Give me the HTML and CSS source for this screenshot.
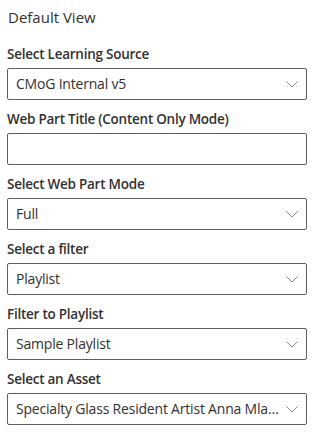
FILE: index.html
```html
<!DOCTYPE html>
<html>
<head>
<meta charset="utf-8">
<link rel="stylesheet" href="styles.css">
</head>
<body>
<div class="pane">
  <div class="header">Default View</div>
  <div class="fields">
    <div class="field">
      <div class="label">Select Learning Source</div>
      <div class="dropdown"><span class="value">CMoG Internal v5</span><svg class="caret" width="12" height="7" viewBox="0 0 12 7"><polyline points="0.5,0.5 6,6 11.5,0.5" fill="none" stroke="#8a8886" stroke-width="1"/></svg></div>
    </div>
    <div class="field">
      <div class="label">Web Part Title (Content Only Mode)</div>
      <div class="textfield"></div>
    </div>
    <div class="field">
      <div class="label">Select Web Part Mode</div>
      <div class="dropdown"><span class="value">Full</span><svg class="caret" width="12" height="7" viewBox="0 0 12 7"><polyline points="0.5,0.5 6,6 11.5,0.5" fill="none" stroke="#8a8886" stroke-width="1"/></svg></div>
    </div>
    <div class="field">
      <div class="label">Select a filter</div>
      <div class="dropdown"><span class="value">Playlist</span><svg class="caret" width="12" height="7" viewBox="0 0 12 7"><polyline points="0.5,0.5 6,6 11.5,0.5" fill="none" stroke="#8a8886" stroke-width="1"/></svg></div>
    </div>
    <div class="field">
      <div class="label">Filter to Playlist</div>
      <div class="dropdown"><span class="value">Sample Playlist</span><svg class="caret" width="12" height="7" viewBox="0 0 12 7"><polyline points="0.5,0.5 6,6 11.5,0.5" fill="none" stroke="#8a8886" stroke-width="1"/></svg></div>
    </div>
    <div class="field">
      <div class="label">Select an Asset</div>
      <div class="dropdown"><span class="value">Specialty Glass Resident Artist Anna Mlasowsky</span><svg class="caret" width="12" height="7" viewBox="0 0 12 7"><polyline points="0.5,0.5 6,6 11.5,0.5" fill="none" stroke="#8a8886" stroke-width="1"/></svg></div>
    </div>
  </div>
</div>
</body>
</html>
```

FILE: styles.css
```css
html, body {
  margin: 0;
  padding: 0;
  background: #ffffff;
}
.pane {
  width: 300px;
  padding: 0 15px 0 7px;
  font-family: "Open Sans", "Noto Sans", sans-serif;
  color: #323130;
}
.header {
  padding: 6px 0 0 1px;
  height: 32px;
  line-height: 22px;
  font-size: 15px;
  font-weight: 400;
}
.fields {
  display: flex;
  flex-direction: column;
  gap: 3px;
}
.field {
  display: flex;
  flex-direction: column;
}
.label {
  font-size: 13.5px;
  font-weight: 600;
  letter-spacing: -0.25px;
  line-height: 20px;
  padding: 6px 0 4px 0;
}
.dropdown, .textfield {
  box-sizing: border-box;
  height: 32px;
  border: 1px solid #605e5c;
  border-radius: 2px;
  display: flex;
  align-items: center;
}
.dropdown {
  padding: 0 8px 0 8px;
  gap: 6px;
}
.value {
  flex: 1;
  min-width: 0;
  white-space: nowrap;
  overflow: hidden;
  text-overflow: ellipsis;
  font-size: 14px;
  letter-spacing: -0.2px;
  line-height: 30px;
}
.caret {
  flex: none;
}
```
